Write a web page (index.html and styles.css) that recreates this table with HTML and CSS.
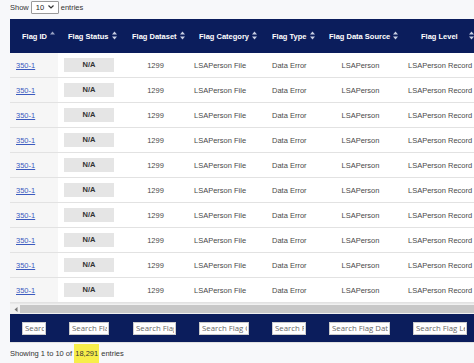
FILE: index.html
```html
<!DOCTYPE html>
<html>
<head>
<meta charset="utf-8">
<link rel="stylesheet" href="styles.css">
</head>
<body>
<div class="page">
  <div class="toolbar">
    <span>Show</span>
    <span class="select"><span class="sel-val">10</span><svg class="chev" width="6" height="4" viewBox="0 0 6 4"><path d="M0.5 0.5 L3 3 L5.5 0.5" fill="none" stroke="#333" stroke-width="1.2"/></svg></span>
    <span>entries</span>
  </div>
  <div class="scroller">
    <table class="grid">
      <colgroup>
        <col class="w1"><col class="w2"><col class="w3"><col class="w4"><col class="w5"><col class="w6"><col class="w7">
      </colgroup>
      <thead>
        <tr>
          <th class="h1">Flag ID <svg class="sort" width="5" height="9" viewBox="0 0 5 9"><path d="M0 3.5 L2.5 0.5 L5 3.5Z" fill="#9aa3c4"/></svg></th>
          <th class="h2">Flag Status <svg class="sort" width="5" height="9" viewBox="0 0 5 9"><path d="M0 3.5 L2.5 0.5 L5 3.5Z M0 5.5 L2.5 8.5 L5 5.5Z" fill="#c9cfe3"/></svg></th>
          <th class="h3">Flag Dataset <svg class="sort" width="5" height="9" viewBox="0 0 5 9"><path d="M0 3.5 L2.5 0.5 L5 3.5Z M0 5.5 L2.5 8.5 L5 5.5Z" fill="#c9cfe3"/></svg></th>
          <th class="h4">Flag Category <svg class="sort" width="5" height="9" viewBox="0 0 5 9"><path d="M0 3.5 L2.5 0.5 L5 3.5Z M0 5.5 L2.5 8.5 L5 5.5Z" fill="#c9cfe3"/></svg></th>
          <th class="h5">Flag Type <svg class="sort" width="5" height="9" viewBox="0 0 5 9"><path d="M0 3.5 L2.5 0.5 L5 3.5Z M0 5.5 L2.5 8.5 L5 5.5Z" fill="#c9cfe3"/></svg></th>
          <th class="h6">Flag Data Source <svg class="sort" width="5" height="9" viewBox="0 0 5 9"><path d="M0 3.5 L2.5 0.5 L5 3.5Z M0 5.5 L2.5 8.5 L5 5.5Z" fill="#c9cfe3"/></svg></th>
          <th class="h7">Flag Level <svg class="sort wide" width="5" height="9" viewBox="0 0 5 9"><path d="M0 3.5 L2.5 0.5 L5 3.5Z M0 5.5 L2.5 8.5 L5 5.5Z" fill="#c9cfe3"/></svg></th>
        </tr>
      </thead>
      <tbody>
        <tr><td class="c1"><a href="#">350-1</a></td><td class="c2"><span class="badge">N/A</span></td><td class="c3">1299</td><td class="c4">LSAPerson File</td><td class="c5">Data Error</td><td class="c6">LSAPerson</td><td class="c7">LSAPerson Record</td></tr>
        <tr><td class="c1"><a href="#">350-1</a></td><td class="c2"><span class="badge">N/A</span></td><td class="c3">1299</td><td class="c4">LSAPerson File</td><td class="c5">Data Error</td><td class="c6">LSAPerson</td><td class="c7">LSAPerson Record</td></tr>
        <tr><td class="c1"><a href="#">350-1</a></td><td class="c2"><span class="badge">N/A</span></td><td class="c3">1299</td><td class="c4">LSAPerson File</td><td class="c5">Data Error</td><td class="c6">LSAPerson</td><td class="c7">LSAPerson Record</td></tr>
        <tr><td class="c1"><a href="#">350-1</a></td><td class="c2"><span class="badge">N/A</span></td><td class="c3">1299</td><td class="c4">LSAPerson File</td><td class="c5">Data Error</td><td class="c6">LSAPerson</td><td class="c7">LSAPerson Record</td></tr>
        <tr><td class="c1"><a href="#">350-1</a></td><td class="c2"><span class="badge">N/A</span></td><td class="c3">1299</td><td class="c4">LSAPerson File</td><td class="c5">Data Error</td><td class="c6">LSAPerson</td><td class="c7">LSAPerson Record</td></tr>
        <tr><td class="c1"><a href="#">350-1</a></td><td class="c2"><span class="badge">N/A</span></td><td class="c3">1299</td><td class="c4">LSAPerson File</td><td class="c5">Data Error</td><td class="c6">LSAPerson</td><td class="c7">LSAPerson Record</td></tr>
        <tr><td class="c1"><a href="#">350-1</a></td><td class="c2"><span class="badge">N/A</span></td><td class="c3">1299</td><td class="c4">LSAPerson File</td><td class="c5">Data Error</td><td class="c6">LSAPerson</td><td class="c7">LSAPerson Record</td></tr>
        <tr><td class="c1"><a href="#">350-1</a></td><td class="c2"><span class="badge">N/A</span></td><td class="c3">1299</td><td class="c4">LSAPerson File</td><td class="c5">Data Error</td><td class="c6">LSAPerson</td><td class="c7">LSAPerson Record</td></tr>
        <tr><td class="c1"><a href="#">350-1</a></td><td class="c2"><span class="badge">N/A</span></td><td class="c3">1299</td><td class="c4">LSAPerson File</td><td class="c5">Data Error</td><td class="c6">LSAPerson</td><td class="c7">LSAPerson Record</td></tr>
        <tr><td class="c1"><a href="#">350-1</a></td><td class="c2"><span class="badge">N/A</span></td><td class="c3">1299</td><td class="c4">LSAPerson File</td><td class="c5">Data Error</td><td class="c6">LSAPerson</td><td class="c7">LSAPerson Record</td></tr>
      </tbody>
    </table>
    <div class="hscroll">
      <svg class="arrow" width="4" height="5" viewBox="0 0 4 5"><path d="M3.5 0 L0.5 2.5 L3.5 5Z" fill="#777"/></svg>
      <div class="thumb"></div>
    </div>
    <table class="grid foot">
      <colgroup>
        <col class="w1"><col class="w2"><col class="w3"><col class="w4"><col class="w5"><col class="w6"><col class="w7">
      </colgroup>
      <tr>
        <td class="f1"><input class="search s1" placeholder="Search Flag ID"></td>
        <td class="f2"><input class="search s2" placeholder="Search Flag Status"></td>
        <td class="f3"><input class="search s3" placeholder="Search Flag Dataset"></td>
        <td class="f4"><input class="search s4" placeholder="Search Flag Category"></td>
        <td class="f5"><input class="search s5" placeholder="Search Flag Type"></td>
        <td class="f6"><input class="search s6" placeholder="Search Flag Data Source"></td>
        <td class="f7"><input class="search s7" placeholder="Search Flag Level"></td>
      </tr>
    </table>
  </div>
  <div class="info">Showing 1 to 10 of&nbsp;<mark class="hl">18,291</mark>&nbsp;entries</div>
</div>
</body>
</html>
```
FILE: styles.css
```css
html, body {
  margin: 0;
  padding: 0;
  background: #f7f8fa;
  overflow: hidden;
}
.page {
  width: 474px;
  height: 363px;
  padding-left: 10px;
  box-sizing: border-box;
  font-family: "Liberation Sans", Arial, sans-serif;
  font-size: 7.5px;
  color: #333;
}
.toolbar {
  display: flex;
  align-items: center;
  gap: 2px;
  height: 14px;
  margin-bottom: 5px;
  color: #333;
  font-size: 7.5px;
}
.select {
  display: inline-flex;
  align-items: center;
  justify-content: space-between;
  box-sizing: border-box;
  width: 28px;
  height: 13px;
  padding: 0 4px 0 4px;
  background: #fff;
  border: 1px solid #9a9a9a;
  border-radius: 1px;
  color: #222;
}
.chev { display: block; }
.scroller {
  overflow: hidden;
  width: 464px;
}
.grid {
  table-layout: fixed;
  border-collapse: separate;
  border-spacing: 0;
  width: 480px;
}
.w1 { width: 48px; }
.w2 { width: 70px; }
.w3 { width: 65px; }
.w4 { width: 70px; }
.w5 { width: 59px; }
.w6 { width: 83px; }
.w7 { width: 85px; }
th {
  background: #0b1d5c;
  color: #fff;
  font-weight: bold;
  height: 34px;
  padding: 0;
  text-align: left;
  white-space: nowrap;
  font-size: 7.5px;
}
.sort { vertical-align: -1px; margin-left: 1px; }
.sort.wide { margin-left: 9px; }
.h1 { padding-left: 12px; }
.h2 { padding-left: 10px; }
.h3 { padding-left: 4px; }
.h4 { padding-left: 6px; }
.h5 { padding-left: 9px; }
.h6 { padding-left: 7px; }
.h7 { padding-left: 16px; }
tbody td {
  height: 24px;
  padding: 0;
  border-bottom: 1px solid #e2e2e2;
  background: #fff;
  white-space: nowrap;
  color: #4a4a4a;
}
tbody td.c1 { background: #f6f6f6; padding-left: 6px; }
td.c2 { padding-left: 6px; }
td.c3 { text-align: center; padding-right: 10px; }
td.c4 { padding-left: 1px; }
td.c5 { padding-left: 9px; }
td.c6 { text-align: center; padding-right: 6px; }
td.c7 { padding-left: 3px; }
a { color: #3c5bbf; text-decoration: underline; }
.badge {
  display: inline-block;
  width: 50px;
  height: 14px;
  line-height: 14px;
  background: #e5e5e5;
  text-align: center;
  font-weight: bold;
  color: #333;
}
.hscroll {
  display: flex;
  align-items: center;
  height: 10px;
  background: #f1f1f1;
  border-top: 1px solid #e8e8e8;
}
.arrow { margin-left: 4px; margin-right: 2px; }
.thumb {
  flex: 1;
  height: 8px;
  background: #c8c8c8;
}
.foot td {
  background: #0b1d5c;
  height: 28px;
  padding: 0;
  vertical-align: middle;
}
.f1 { padding-left: 12px !important; }
.f2 { padding-left: 11px !important; }
.f3 { padding-left: 5px !important; }
.f4 { padding-left: 6px !important; }
.f5 { padding-left: 9px !important; }
.f6 { padding-left: 7px !important; }
.f7 { padding-left: 8px !important; }
.search {
  display: block;
  box-sizing: border-box;
  height: 13px;
  padding: 0 1px 0 2px;
  border: 1px solid #ccc;
  background: #fff;
  font-family: "Open Sans", "DejaVu Sans", sans-serif;
  font-size: 7.8px;
  outline: none;
}
.search::placeholder { color: #666; }
.s1 { width: 24px; }
.s2 { width: 40px; }
.s3 { width: 43px; }
.s4 { width: 50px; }
.s5 { width: 34px; }
.s6 { width: 61px; }
.s7 { width: 54px; }
.info {
  height: 21px;
  display: flex;
  align-items: center;
  font-size: 7.5px;
  color: #333;
}
.hl {
  background: #f7ee4a;
  color: #333;
  padding: 5px 1px 6px;
}
```
